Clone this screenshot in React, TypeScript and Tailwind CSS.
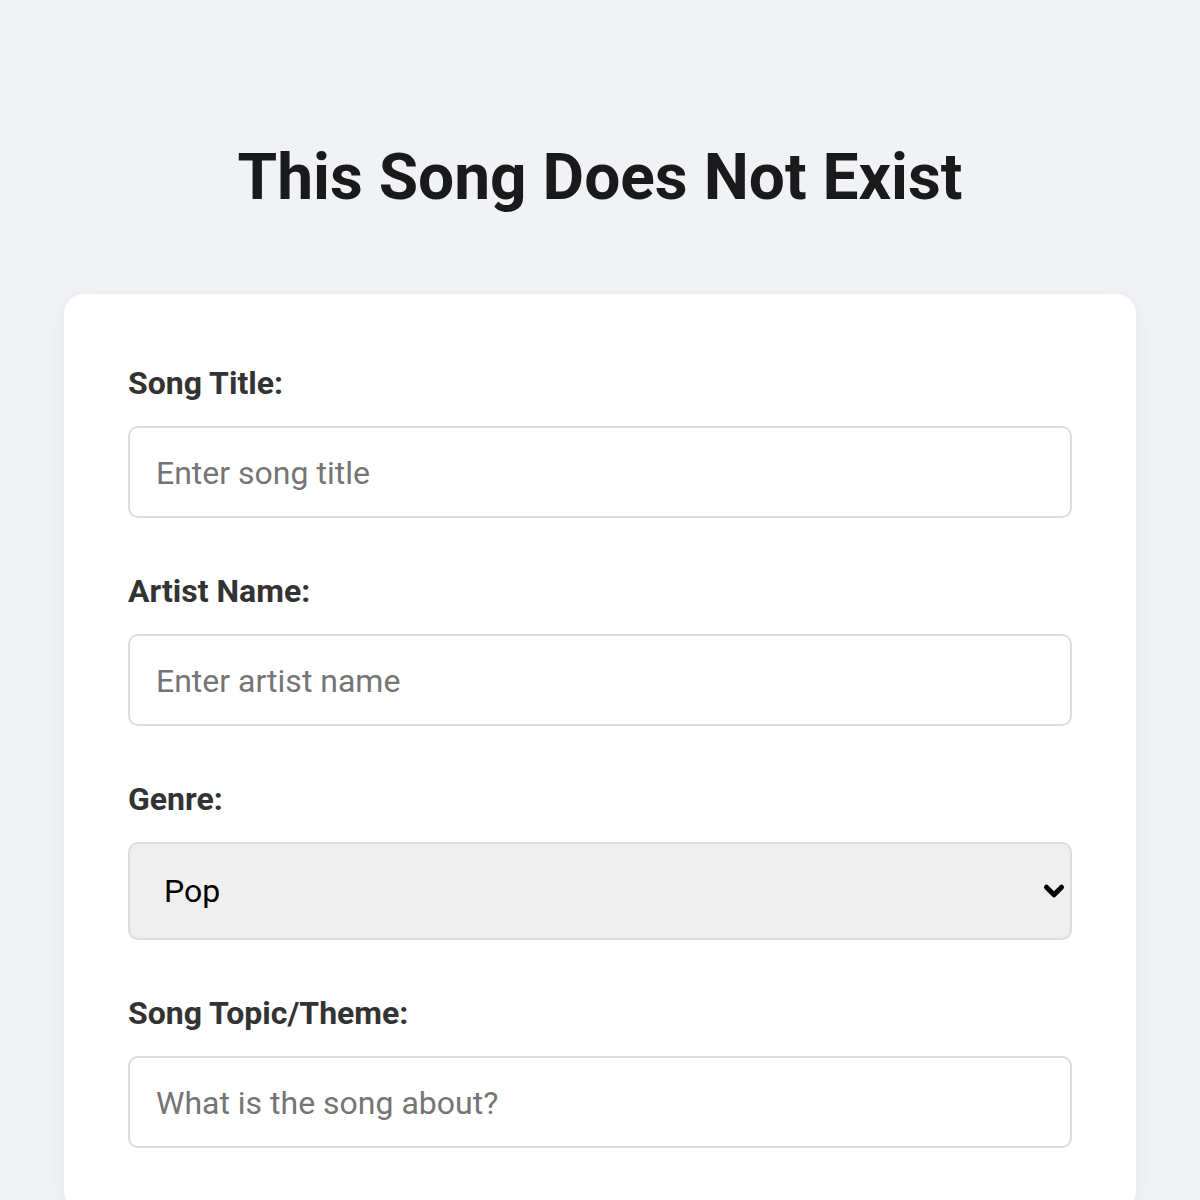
import { ChevronDown } from "lucide-react";

type Field = {
  label: string;
  placeholder?: string;
  kind: "text" | "select";
};

const fields: Field[] = [
  { label: "Song Title:", placeholder: "Enter song title", kind: "text" },
  { label: "Artist Name:", placeholder: "Enter artist name", kind: "text" },
  { label: "Genre:", kind: "select" },
  { label: "Song Topic/Theme:", placeholder: "What is the song about?", kind: "text" },
];

const genres = ["Pop", "Rock", "Hip Hop", "Country", "Jazz", "Electronic"];

export default function App() {
  return (
    <div
      className="min-h-screen bg-[#f0f2f5] px-16 pt-[140px] pb-16"
      style={{ fontFamily: "Roboto, 'Liberation Sans', sans-serif" }}
    >
      <h1 className="text-center text-[64px] leading-[75px] font-bold text-[#1a1a1a]">
        This Song Does Not Exist
      </h1>

      <div className="mt-[79px] rounded-[20px] bg-white px-16 pt-[70px] pb-16 shadow-[0_4px_16px_rgba(0,0,0,0.06)]">
        <form className="flex flex-col gap-[54px]">
          {fields.map((f) => (
            <div key={f.label} className="flex flex-col">
              <label className="mb-6 text-[32px] leading-[38px] font-bold text-[#333333]">
                {f.label}
              </label>
              {f.kind === "text" ? (
                <input
                  type="text"
                  placeholder={f.placeholder}
                  className="h-[92px] w-full rounded-[10px] border-2 border-[#dddddd] bg-white pl-[26px] pr-6 pt-[2px] text-[32px] text-[#333333] outline-none placeholder:text-[#757575]"
                />
              ) : (
                <div className="relative">
                  <select
                    defaultValue="Pop"
                    className="h-[98px] w-full appearance-none rounded-[10px] border-2 border-[#dddddd] bg-[#efefef] pl-[34px] pr-16 text-[32px] text-black outline-none"
                  >
                    {genres.map((g) => (
                      <option key={g}>{g}</option>
                    ))}
                  </select>
                  <ChevronDown
                    className="pointer-events-none absolute right-[3px] top-1/2 h-[30px] w-[30px] -translate-y-1/2 text-black"
                    strokeWidth={4}
                  />
                </div>
              )}
            </div>
          ))}
        </form>
      </div>
    </div>
  );
}
